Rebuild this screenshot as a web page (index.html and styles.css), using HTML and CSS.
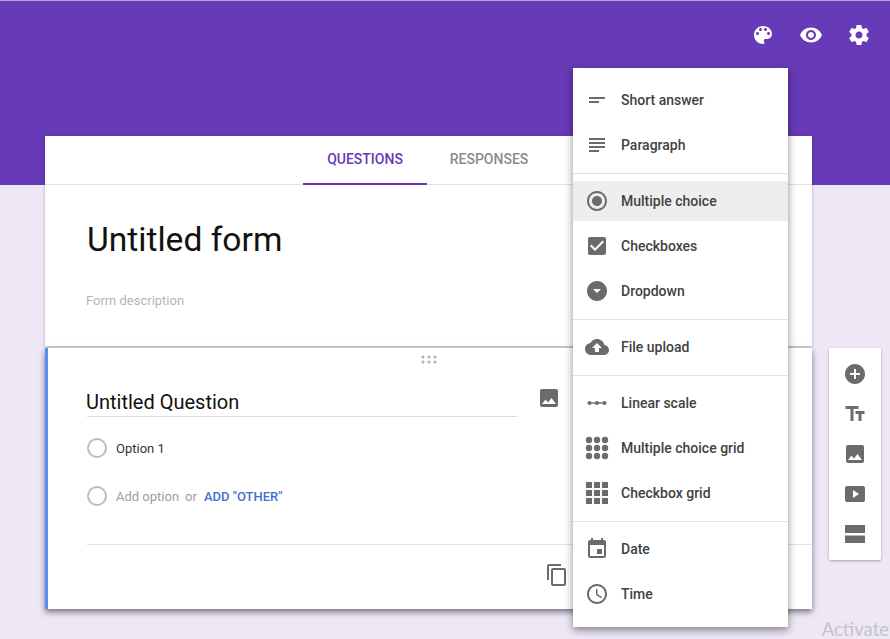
FILE: index.html
```html
<!DOCTYPE html>
<html lang="en">
<head>
    <meta charset="UTF-8">
    <meta name="viewport" content="width=device-width, initial-scale=1.0">
    <title>Untitled form</title>
    <link rel="stylesheet" href="styles.css">
</head>
<body>

<header class="top-band">
    <svg class="icon icon-white" viewBox="0 0 24 24"><path d="M12 3c-4.97 0-9 4.03-9 9s4.03 9 9 9c.83 0 1.5-.67 1.5-1.5 0-.39-.15-.74-.39-1.01-.23-.26-.38-.61-.38-.99 0-.83.67-1.5 1.5-1.5H16c2.76 0 5-2.24 5-5 0-4.42-4.03-8-9-8zm-5.5 9c-.83 0-1.5-.67-1.5-1.5S5.67 9 6.5 9 8 9.67 8 10.5 7.33 12 6.5 12zm3-4C8.67 8 8 7.33 8 6.5S8.67 5 9.5 5s1.5.67 1.5 1.5S10.33 8 9.5 8zm5 0c-.83 0-1.5-.67-1.5-1.5S13.67 5 14.5 5s1.5.67 1.5 1.5S15.33 8 14.5 8zm3 4c-.83 0-1.5-.67-1.5-1.5S16.67 9 17.5 9s1.5.67 1.5 1.5-.67 1.5-1.5 1.5z"/></svg>
    <svg class="icon icon-white" viewBox="0 0 24 24"><path d="M12 4.5C7 4.5 2.73 7.61 1 12c1.73 4.39 6 7.5 11 7.5s9.27-3.11 11-7.5c-1.73-4.39-6-7.5-11-7.5zM12 17c-2.76 0-5-2.24-5-5s2.24-5 5-5 5 2.24 5 5-2.24 5-5 5zm0-8c-1.66 0-3 1.34-3 3s1.34 3 3 3 3-1.34 3-3-1.34-3-3-3z"/></svg>
    <svg class="icon icon-white" viewBox="0 0 24 24"><path d="M19.43 12.98c.04-.32.07-.64.07-.98s-.03-.66-.07-.98l2.11-1.65c.19-.15.24-.42.12-.64l-2-3.46c-.12-.22-.39-.3-.61-.22l-2.49 1c-.52-.4-1.08-.73-1.69-.98l-.38-2.65C14.46 2.18 14.25 2 14 2h-4c-.25 0-.46.18-.49.42l-.38 2.65c-.61.25-1.17.59-1.69.98l-2.49-1c-.23-.09-.49 0-.61.22l-2 3.46c-.13.22-.07.49.12.64l2.11 1.65c-.04.32-.07.65-.07.98s.03.66.07.98l-2.11 1.65c-.19.15-.24.42-.12.64l2 3.46c.12.22.39.3.61.22l2.49-1c.52.4 1.08.73 1.69.98l.38 2.65c.03.24.24.42.49.42h4c.25 0 .46-.18.49-.42l.38-2.65c.61-.25 1.17-.59 1.69-.98l2.49 1c.23.09.49 0 .61-.22l2-3.46c.12-.22.07-.49-.12-.64l-2.11-1.65zM12 15.5c-1.93 0-3.5-1.57-3.5-3.5s1.57-3.5 3.5-3.5 3.5 1.57 3.5 3.5-1.57 3.5-3.5 3.5z"/></svg>
</header>

<main class="content">
    <section class="title-card">
        <nav class="tabs">
            <a href="#" class="tab tab-active">QUESTIONS</a>
            <a href="#" class="tab">RESPONSES</a>
        </nav>
        <div class="title-body">
            <h1 class="form-title">Untitled form</h1>
            <p class="form-desc">Form description</p>
        </div>
    </section>

    <div class="question-row">
        <section class="question-card">
            <svg class="drag-handle" viewBox="0 0 16 9" width="16" height="9">
                <circle cx="2" cy="2" r="1.6"/><circle cx="8" cy="2" r="1.6"/><circle cx="14" cy="2" r="1.6"/>
                <circle cx="2" cy="7" r="1.6"/><circle cx="8" cy="7" r="1.6"/><circle cx="14" cy="7" r="1.6"/>
            </svg>
            <div class="question-head">
                <div class="question-title">Untitled Question</div>
                <svg class="icon" viewBox="0 0 24 24"><path d="M21 19V5c0-1.1-.9-2-2-2H5c-1.1 0-2 .9-2 2v14c0 1.1.9 2 2 2h14c1.1 0 2-.9 2-2zM8.5 13.5l2.5 3.01L14.5 12l4.5 6H5l3.5-4.5z"/></svg>
            </div>
            <div class="option">
                <span class="radio"></span>
                <span class="option-text">Option 1</span>
            </div>
            <div class="option option-add">
                <span class="radio"></span>
                <span class="option-muted">Add option</span>
                <span class="option-or">or</span>
                <a href="#" class="add-other">ADD "OTHER"</a>
            </div>
            <div class="question-foot">
                <svg class="icon" viewBox="0 0 24 24"><path d="M16 1H4c-1.1 0-2 .9-2 2v14h2V3h12V1zm3 4H8c-1.1 0-2 .9-2 2v14c0 1.1.9 2 2 2h11c1.1 0 2-.9 2-2V7c0-1.1-.9-2-2-2zm0 16H8V7h11v14z"/></svg>
            </div>
        </section>

        <aside class="toolbar">
            <svg class="icon" viewBox="0 0 24 24"><path d="M12 2C6.48 2 2 6.48 2 12s4.48 10 10 10 10-4.48 10-10S17.52 2 12 2zm5 11h-4v4h-2v-4H7v-2h4V7h2v4h4v2z"/></svg>
            <svg class="icon" viewBox="0 0 24 24"><path d="M2.5 4v3h5v12h3V7h5V4h-13zm19 5h-9v3h3v7h3v-7h3V9z"/></svg>
            <svg class="icon" viewBox="0 0 24 24"><path d="M21 19V5c0-1.1-.9-2-2-2H5c-1.1 0-2 .9-2 2v14c0 1.1.9 2 2 2h14c1.1 0 2-.9 2-2zM8.5 13.5l2.5 3.01L14.5 12l4.5 6H5l3.5-4.5z"/></svg>
            <svg class="icon" viewBox="0 0 24 24"><path d="M20 4H4c-1.1 0-2 .9-2 2v12c0 1.1.9 2 2 2h16c1.1 0 2-.9 2-2V6c0-1.1-.9-2-2-2zm-10 12V8l6 4-6 4z"/></svg>
            <svg class="icon" viewBox="0 0 24 24"><path d="M2 3h20v8H2zM2 13.500h20V21H2z"/></svg>
        </aside>
    </div>
</main>

<div class="type-menu">
    <div class="menu-group menu-group-first">
        <div class="menu-item">
            <svg class="icon" viewBox="0 0 24 24"><path d="M4 9h16v2H4zm0 4h10v2H4z"/></svg>
            Short answer
        </div>
        <div class="menu-item">
            <svg class="icon" viewBox="0 0 24 24"><path d="M14 17H4v2h10v-2zm6-8H4v2h16V9zM4 15h16v-2H4v2zM4 5v2h16V5H4z"/></svg>
            Paragraph
        </div>
    </div>
    <div class="menu-group">
        <div class="menu-item menu-item-active">
            <svg class="icon" viewBox="0 0 24 24"><path d="M12 7c-2.76 0-5 2.24-5 5s2.24 5 5 5 5-2.24 5-5-2.24-5-5-5zm0-5C6.48 2 2 6.48 2 12s4.48 10 10 10 10-4.48 10-10S17.52 2 12 2zm0 18c-4.42 0-8-3.58-8-8s3.58-8 8-8 8 3.58 8 8-3.58 8-8 8z"/></svg>
            Multiple choice
        </div>
        <div class="menu-item">
            <svg class="icon" viewBox="0 0 24 24"><path d="M19 3H5c-1.11 0-2 .9-2 2v14c0 1.1.89 2 2 2h14c1.11 0 2-.9 2-2V5c0-1.1-.89-2-2-2zm-9 14l-5-5 1.41-1.41L10 14.17l7.59-7.59L19 8l-9 9z"/></svg>
            Checkboxes
        </div>
        <div class="menu-item">
            <svg class="icon" viewBox="0 0 24 24"><path d="M12 2C6.48 2 2 6.48 2 12s4.48 10 10 10 10-4.48 10-10S17.52 2 12 2zm0 12l-4-4h8l-4 4z"/></svg>
            Dropdown
        </div>
    </div>
    <div class="menu-group">
        <div class="menu-item">
            <svg class="icon" viewBox="0 0 24 24"><path d="M19.35 10.04C18.67 6.59 15.64 4 12 4 9.11 4 6.6 5.64 5.35 8.04 2.34 8.36 0 10.91 0 14c0 3.31 2.69 6 6 6h13c2.76 0 5-2.24 5-5 0-2.64-2.05-4.78-4.65-4.96zM14 13v4h-4v-4H7l5-5 5 5h-3z"/></svg>
            File upload
        </div>
    </div>
    <div class="menu-group">
        <div class="menu-item">
            <svg class="icon" viewBox="0 0 24 24"><path d="M3 11.300h18v1.400H3z"/><circle cx="4.500" cy="12" r="2"/><circle cx="12" cy="12" r="2"/><circle cx="19.500" cy="12" r="2"/></svg>
            Linear scale
        </div>
        <div class="menu-item">
            <svg class="icon" viewBox="0 0 24 24">
                <circle cx="4" cy="4" r="3.200"/><circle cx="12" cy="4" r="3.200"/><circle cx="20" cy="4" r="3.200"/>
                <circle cx="4" cy="12" r="3.200"/><circle cx="12" cy="12" r="3.200"/><circle cx="20" cy="12" r="3.200"/>
                <circle cx="4" cy="20" r="3.200"/><circle cx="12" cy="20" r="3.200"/><circle cx="20" cy="20" r="3.200"/>
            </svg>
            Multiple choice grid
        </div>
        <div class="menu-item">
            <svg class="icon" viewBox="0 0 24 24"><path d="M1 1h6v6H1zM9 1h6v6H9zM17 1h6v6h-6zM1 9h6v6H1zM9 9h6v6H9zM17 9h6v6h-6zM1 17h6v6H1zM9 17h6v6H9zM17 17h6v6h-6z"/></svg>
            Checkbox grid
        </div>
    </div>
    <div class="menu-group">
        <div class="menu-item">
            <svg class="icon" viewBox="0 0 24 24"><path d="M17 12h-5v5h5v-5zM16 1v2H8V1H6v2H5c-1.110 0-1.990.9-1.990 2L3 19c0 1.100.89 2 2 2h14c1.100 0 2-.9 2-2V5c0-1.100-.9-2-2-2h-1V1h-2zm3 18H5V8h14v11z"/></svg>
            Date
        </div>
        <div class="menu-item">
            <svg class="icon" viewBox="0 0 24 24"><path d="M11.990 2C6.470 2 2 6.480 2 12s4.470 10 9.990 10C17.520 22 22 17.520 22 12S17.520 2 11.990 2zM12 20c-4.420 0-8-3.580-8-8s3.580-8 8-8 8 3.580 8 8-3.580 8-8 8zm.5-13H11v6l5.250 3.150.75-1.230-4.500-2.670z"/></svg>
            Time
        </div>
    </div>
</div>

<div class="watermark">Activate</div>

</body>
</html>
```

FILE: styles.css
```css
html, body {
    height: 100%;
}

body {
    margin: 0;
    position: relative;
    overflow: hidden;
    background-color: #ede7f6;
    font-family: 'Roboto', sans-serif;
    color: #212121;
}

.icon {
    display: block;
    width: 24px;
    height: 24px;
    flex: none;
    fill: #6b6b6b;
}

.icon-white {
    fill: #ffffff;
}

.top-band {
    height: 185px;
    box-sizing: border-box;
    padding: 22px 19px 0 0;
    display: flex;
    justify-content: flex-end;
    gap: 24px;
    background-color: #673ab7;
    border-top: 1px solid #b9a3dc;
}

.content {
    margin-top: -49px;
    padding-left: 45px;
}

.title-card {
    width: 767px;
    height: 210px;
    background-color: #ffffff;
    box-shadow: 0 1px 3px rgba(0, 0, 0, 0.25);
}

.tabs {
    height: 49px;
    box-sizing: border-box;
    padding-right: 3px;
    display: flex;
    justify-content: center;
    border-bottom: 1px solid #e0e0e0;
}

.tab {
    width: 124px;
    height: 49px;
    box-sizing: border-box;
    padding-top: 15px;
    text-align: center;
    font-size: 14px;
    font-weight: 500;
    color: #8a8a8a;
    text-decoration: none;
}

.tab-active {
    color: #673ab7;
    border-bottom: 2px solid #673ab7;
}

.title-body {
    padding: 34px 42px 0;
}

.form-title {
    margin: 0;
    font-size: 33.6px;
    line-height: 42px;
    font-weight: 400;
    color: #111111;
}

.form-desc {
    margin: 32px 0 0 -1px;
    font-size: 13px;
    line-height: 16px;
    color: #b5b5b5;
}

.question-row {
    margin-top: 2px;
    display: flex;
    align-items: flex-start;
    gap: 17px;
}

.question-card {
    position: relative;
    width: 767px;
    height: 261px;
    box-sizing: border-box;
    padding: 38px 0 0 39px;
    background-color: #ffffff;
    border-left: 3px solid #5b8def;
    box-shadow: 0 3px 6px rgba(0, 0, 0, 0.5);
}

.drag-handle {
    position: absolute;
    left: 373px;
    top: 7px;
    fill: #b4b4b4;
}

.question-head {
    display: flex;
    align-items: flex-start;
    gap: 20px;
}

.question-title {
    width: 430px;
    height: 31px;
    box-sizing: border-box;
    border-bottom: 1px solid #dcdcdc;
    font-size: 20px;
    line-height: 32px;
    text-indent: -1px;
    color: #111111;
}

.option {
    margin-top: 20px;
    display: flex;
    align-items: center;
    height: 22px;
    font-size: 13px;
}

.option-add {
    margin-top: 26px;
}

.radio {
    width: 20px;
    height: 20px;
    box-sizing: border-box;
    margin-right: 9px;
    border: 2px solid #bdbdbd;
    border-radius: 50%;
}

.option-text {
    color: #333333;
}

.option-muted,
.option-or {
    color: #9e9e9e;
}

.option-or {
    margin-left: 6px;
}

.add-other {
    margin-left: 7px;
    font-size: 13px;
    font-weight: 500;
    color: #4471cf;
    text-decoration: none;
}

.question-foot {
    margin-top: 37px;
    padding: 18px 243px 0 0;
    display: flex;
    justify-content: flex-end;
    border-top: 1px solid #e0e0e0;
}

.toolbar {
    width: 52px;
    height: 212px;
    box-sizing: border-box;
    padding: 14px 0;
    display: flex;
    flex-direction: column;
    align-items: center;
    gap: 16px;
    background-color: #ffffff;
    border-radius: 2px;
    box-shadow: 0 1px 3px rgba(0, 0, 0, 0.3);
}

.type-menu {
    position: absolute;
    left: 573px;
    top: 68px;
    width: 215px;
    height: 559px;
    background-color: #ffffff;
    box-shadow: 0 3px 8px rgba(0, 0, 0, 0.45);
}

.menu-group {
    padding: 7px 0 8px;
    display: flex;
    flex-direction: column;
    gap: 5px;
    border-top: 1px solid #e0e0e0;
}

.menu-group-first {
    padding: 12px 0 8px;
    border-top: none;
}

.menu-item {
    height: 40px;
    padding-left: 12px;
    display: flex;
    align-items: center;
    gap: 12px;
    font-size: 14px;
    font-weight: 500;
    color: #424242;
}

.menu-item-active {
    background-color: #eeeeee;
}

.watermark {
    position: absolute;
    right: 1px;
    bottom: 0;
    font-family: 'Lato', sans-serif;
    font-size: 18.5px;
    line-height: 19px;
    color: #c4c4c8;
    white-space: nowrap;
}
```
